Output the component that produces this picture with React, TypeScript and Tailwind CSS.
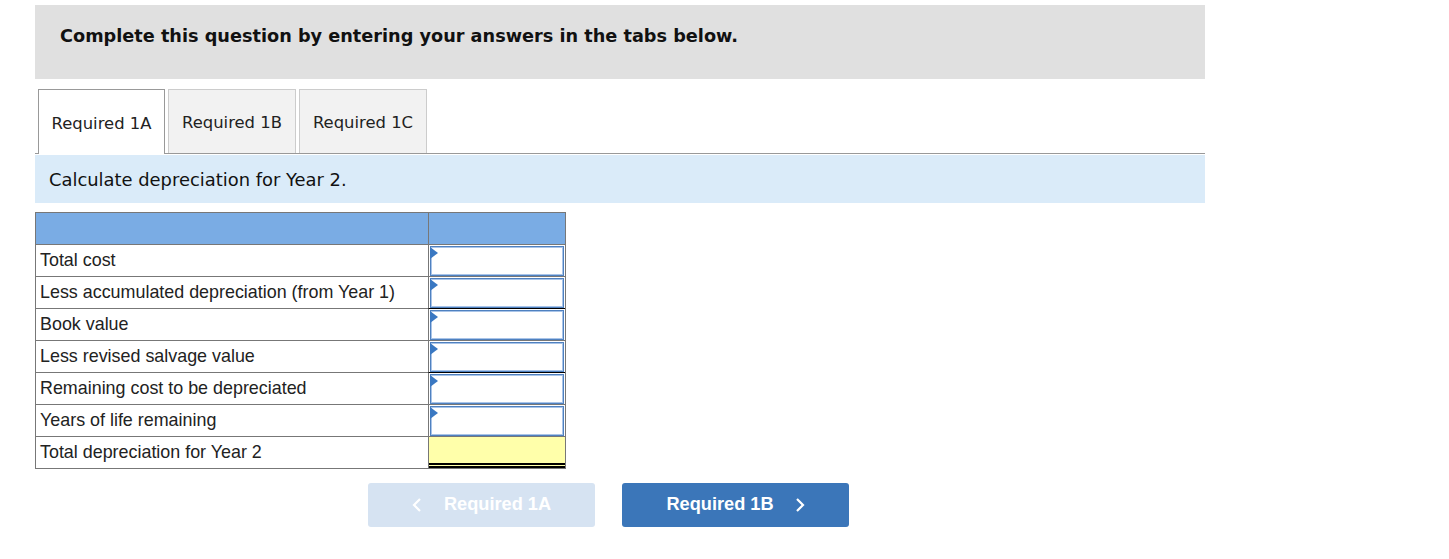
import React from "react";

const rows: { label: string; kind: "input" | "total"; black?: boolean }[] = [
  { label: "Total cost", kind: "input" },
  { label: "Less accumulated depreciation (from Year 1)", kind: "input", black: true },
  { label: "Book value", kind: "input" },
  { label: "Less revised salvage value", kind: "input", black: true },
  { label: "Remaining cost to be depreciated", kind: "input" },
  { label: "Years of life remaining", kind: "input" },
  { label: "Total depreciation for Year 2", kind: "total" },
];

function InputCell({ black }: { black?: boolean }) {
  return (
    <div className={`relative h-[32px] border-l border-[#777] px-px pt-px ${black ? "border-b border-b-black" : "border-b border-b-[#777]"}`}>
      <div className="h-[30px] w-full border border-[#4f81c0] bg-white shadow-[inset_0_0_0_1px_#a9c4e8]" />
      <svg className="absolute left-px top-[2px]" width="9" height="13" viewBox="0 0 9 13">
        <polygon points="0,0 8,6 0,12" fill="#3a78c2" />
      </svg>
    </div>
  );
}

export default function App() {
  return (
    <div className="bg-white min-h-[559px] pl-[35px] pt-[5px]">
      <div className="w-[1170px]">
        <div className="h-[74px] bg-[#e0e0e0] pl-[25px] pt-[19px]" style={{ fontFamily: "Verdana, 'DejaVu Sans', sans-serif" }}>
          <div className="text-[17.7px] font-bold text-[#111] leading-[24px]">Complete this question by entering your answers in the tabs below.</div>
        </div>

        <div className="mt-[10px] flex h-[65px] items-stretch border-b border-[#999]" style={{ fontFamily: "Verdana, 'DejaVu Sans', sans-serif" }}>
          <div className="ml-[3px] -mb-px flex w-[127px] items-center justify-center border-l border-r border-t border-[#999] bg-white pt-[4px] text-[16.4px] text-[#222]">
            Required 1A
          </div>
          <div className="ml-[3px] flex w-[128px] items-center justify-center border-l border-r border-t border-[#ccc] bg-[#f2f2f2] pt-[4px] text-[16.4px] text-[#222]">
            Required 1B
          </div>
          <div className="ml-[3px] flex w-[128px] items-center justify-center border-l border-r border-t border-[#ccc] bg-[#f2f2f2] pt-[4px] text-[16.4px] text-[#222]">
            Required 1C
          </div>
        </div>

        <div className="mt-px flex h-[48px] items-center bg-[#daebf9] pl-[14px] pt-[2px] text-[17.9px] text-[#111]" style={{ fontFamily: "Verdana, 'DejaVu Sans', sans-serif" }}>
          Calculate depreciation for Year 2.
        </div>

        <div className="mt-[9px] w-[531px] border-l border-r border-t border-[#777]" style={{ fontFamily: "Arial, 'Liberation Sans', sans-serif" }}>
          <div className="grid grid-cols-[392px_137px]">
            <div className="h-[32px] border-b border-[#777] bg-[#7aace4]" />
            <div className="h-[32px] border-b border-l border-[#777] bg-[#7aace4]" />
            {rows.map((r) => (
              <React.Fragment key={r.label}>
                <div className="flex h-[32px] items-center border-b border-[#777] pl-[4px] text-[17.9px] text-[#222]">
                  {r.label}
                </div>
                {r.kind === "input" ? (
                  <InputCell black={r.black} />
                ) : (
                  <div className="h-[32px] border-l border-b border-[#777]">
                    <div className="h-[28px] bg-[#ffffaa] border-b-[2px] border-black" />
                    <div className="h-[1px] bg-[#ffffaa]" />
                    <div className="h-[2px] bg-black" />
                  </div>
                )}
              </React.Fragment>
            ))}
          </div>
        </div>

        <div className="ml-[333px] mt-[14px] flex gap-[27px]" style={{ fontFamily: "Arial, 'Liberation Sans', sans-serif" }}>
          <button className="flex h-[44px] w-[227px] items-center justify-center gap-[22px] rounded-[3px] bg-[#d6e3f2] text-[18.2px] font-bold text-white">
            <svg width="10" height="16" viewBox="0 0 10 16">
              <polyline points="8,2 2,8 8,14" fill="none" stroke="white" strokeWidth="2.2" />
            </svg>
            <span>Required 1A</span>
          </button>
          <button className="flex h-[44px] w-[227px] items-center justify-center gap-[21px] rounded-[3px] bg-[#3b76b9] text-[18.2px] font-bold text-white">
            <span>Required 1B</span>
            <svg width="10" height="16" viewBox="0 0 10 16">
              <polyline points="2,2 8,8 2,14" fill="none" stroke="white" strokeWidth="2.2" />
            </svg>
          </button>
        </div>
      </div>
    </div>
  );
}
